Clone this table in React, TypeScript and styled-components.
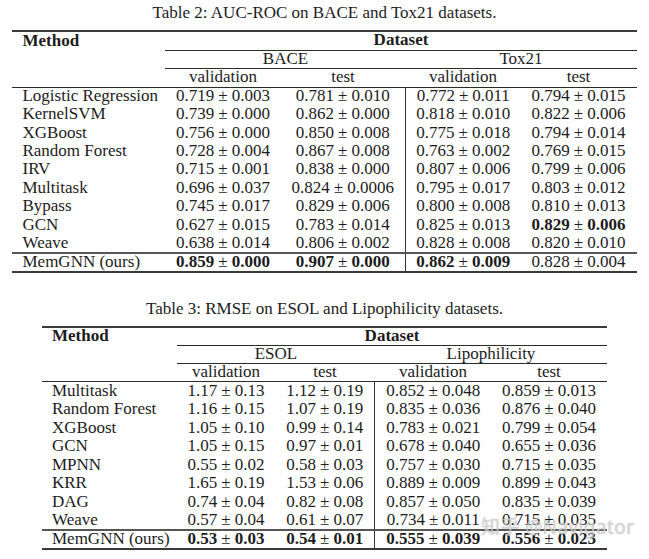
import React from 'react';
import styled, { createGlobalStyle } from 'styled-components';

const GlobalStyle = createGlobalStyle`
  html, body {
    margin: 0;
    padding: 0;
    background: #ffffff;
  }
  body {
    font-family: "Liberation Serif", "Times New Roman", serif;
    color: #1c1c1c;
  }
`;

const Page = styled.div`
  position: relative;
  width: 649px;
  height: 559px;
  overflow: hidden;
  display: flex;
  flex-direction: column;
  align-items: center;
  padding-top: 4px;
  box-sizing: border-box;
`;

const Figure = styled.div<{ $gap?: number }>`
  display: flex;
  flex-direction: column;
  align-items: center;
  margin-top: ${p => p.$gap ?? 0}px;
`;

const Caption = styled.div`
  font-size: 17px;
  line-height: 18px;
  height: 18px;
  margin-bottom: 8px;
  white-space: nowrap;
`;

const Table = styled.table<{ $width: number }>`
  width: ${p => p.$width}px;
  border-collapse: collapse;
  table-layout: fixed;
  font-size: 17px;
  border-top: 2px solid #3a3a3a;
  border-bottom: 2px solid #3a3a3a;
`;

const Row = styled.tr<{ $h: number; $ruleAbove?: boolean }>`
  height: ${p => p.$h}px;
  ${p => (p.$ruleAbove ? 'border-top: 2px solid #555;' : '')}
`;

const HeadRow = styled(Row)<{ $rule?: boolean }>`
  ${p => (p.$rule ? 'border-bottom: 1px solid #2a2a2a;' : '')}
`;

const Cell = styled.td<{ $bold?: boolean; $sep?: boolean; $rule?: boolean }>`
  padding: 0 0 2px 0;
  text-align: center;
  vertical-align: middle;
  white-space: nowrap;
  line-height: 15px;
  font-weight: ${p => (p.$bold ? 700 : 400)};
  ${p => (p.$sep ? 'border-left: 1px solid #333;' : '')}
  ${p => (p.$rule ? 'border-bottom: 1px solid #2a2a2a;' : '')}
`;

const NameCell = styled(Cell)`
  text-align: left;
  padding-left: 10px;
`;

const Num = styled.span<{ $bold?: boolean }>`
  font-weight: ${p => (p.$bold ? 700 : 400)};
`;

const Pm = styled.span`
  font-weight: 400;
  margin: 0 4px;
`;

const Watermark = styled.div`
  position: absolute;
  left: 481px;
  top: 515px;
  font-family: "Noto Sans", "Noto Sans CJK SC", sans-serif;
  font-size: 19px;
  line-height: 24px;
  letter-spacing: 0.4px;
  color: rgba(255, 255, 255, 0.45);
  text-shadow:
    0 0 1px rgba(150, 150, 150, 0.55),
    0 0 1px rgba(150, 150, 150, 0.45);
  white-space: nowrap;
  pointer-events: none;
`;

type Entry = { v: string; b?: boolean };
type DataRow = { name: string; cells: Entry[] };

const Val: React.FC<{ e: Entry }> = ({ e }) => {
  const [a, c] = e.v.split('±').map(s => s.trim());
  return (
    <>
      <Num $bold={e.b}>{a}</Num>
      <Pm>±</Pm>
      <Num $bold={e.b}>{c}</Num>
    </>
  );
};

const auc: DataRow[] = [
  { name: 'Logistic Regression', cells: [{ v: '0.719 ± 0.003' }, { v: '0.781 ± 0.010' }, { v: '0.772 ± 0.011' }, { v: '0.794 ± 0.015' }] },
  { name: 'KernelSVM', cells: [{ v: '0.739 ± 0.000' }, { v: '0.862 ± 0.000' }, { v: '0.818 ± 0.010' }, { v: '0.822 ± 0.006' }] },
  { name: 'XGBoost', cells: [{ v: '0.756 ± 0.000' }, { v: '0.850 ± 0.008' }, { v: '0.775 ± 0.018' }, { v: '0.794 ± 0.014' }] },
  { name: 'Random Forest', cells: [{ v: '0.728 ± 0.004' }, { v: '0.867 ± 0.008' }, { v: '0.763 ± 0.002' }, { v: '0.769 ± 0.015' }] },
  { name: 'IRV', cells: [{ v: '0.715 ± 0.001' }, { v: '0.838 ± 0.000' }, { v: '0.807 ± 0.006' }, { v: '0.799 ± 0.006' }] },
  { name: 'Multitask', cells: [{ v: '0.696 ± 0.037' }, { v: '0.824 ± 0.0006' }, { v: '0.795 ± 0.017' }, { v: '0.803 ± 0.012' }] },
  { name: 'Bypass', cells: [{ v: '0.745 ± 0.017' }, { v: '0.829 ± 0.006' }, { v: '0.800 ± 0.008' }, { v: '0.810 ± 0.013' }] },
  { name: 'GCN', cells: [{ v: '0.627 ± 0.015' }, { v: '0.783 ± 0.014' }, { v: '0.825 ± 0.013' }, { v: '0.829 ± 0.006', b: true }] },
  { name: 'Weave', cells: [{ v: '0.638 ± 0.014' }, { v: '0.806 ± 0.002' }, { v: '0.828 ± 0.008' }, { v: '0.820 ± 0.010' }] },
];
const aucOurs: DataRow = {
  name: 'MemGNN (ours)',
  cells: [{ v: '0.859 ± 0.000', b: true }, { v: '0.907 ± 0.000', b: true }, { v: '0.862 ± 0.009', b: true }, { v: '0.828 ± 0.004' }],
};

const rmse: DataRow[] = [
  { name: 'Multitask', cells: [{ v: '1.17 ± 0.13' }, { v: '1.12 ± 0.19' }, { v: '0.852 ± 0.048' }, { v: '0.859 ± 0.013' }] },
  { name: 'Random Forest', cells: [{ v: '1.16 ± 0.15' }, { v: '1.07 ± 0.19' }, { v: '0.835 ± 0.036' }, { v: '0.876 ± 0.040' }] },
  { name: 'XGBoost', cells: [{ v: '1.05 ± 0.10' }, { v: '0.99 ± 0.14' }, { v: '0.783 ± 0.021' }, { v: '0.799 ± 0.054' }] },
  { name: 'GCN', cells: [{ v: '1.05 ± 0.15' }, { v: '0.97 ± 0.01' }, { v: '0.678 ± 0.040' }, { v: '0.655 ± 0.036' }] },
  { name: 'MPNN', cells: [{ v: '0.55 ± 0.02' }, { v: '0.58 ± 0.03' }, { v: '0.757 ± 0.030' }, { v: '0.715 ± 0.035' }] },
  { name: 'KRR', cells: [{ v: '1.65 ± 0.19' }, { v: '1.53 ± 0.06' }, { v: '0.889 ± 0.009' }, { v: '0.899 ± 0.043' }] },
  { name: 'DAG', cells: [{ v: '0.74 ± 0.04' }, { v: '0.82 ± 0.08' }, { v: '0.857 ± 0.050' }, { v: '0.835 ± 0.039' }] },
  { name: 'Weave', cells: [{ v: '0.57 ± 0.04' }, { v: '0.61 ± 0.07' }, { v: '0.734 ± 0.011' }, { v: '0.715 ± 0.035' }] },
];
const rmseOurs: DataRow = {
  name: 'MemGNN (ours)',
  cells: [{ v: '0.53 ± 0.03', b: true }, { v: '0.54 ± 0.01', b: true }, { v: '0.555 ± 0.039', b: true }, { v: '0.556 ± 0.023', b: true }],
};

interface ResultTableProps {
  caption: string;
  sets: [string, string];
  cols: number[];
  head: [number, number, number];
  rowH: number;
  lastH: number;
  rows: DataRow[];
  ours: DataRow;
  gap?: number;
}

const ResultTable: React.FC<ResultTableProps> = ({ caption, sets, cols, head, rowH, lastH, rows, ours, gap }) => {
  const width = cols.reduce((a, b) => a + b, 0);
  const renderRow = (r: DataRow, h: number, last?: boolean) => (
    <Row key={r.name} $h={h} $ruleAbove={last}>
      <NameCell>{r.name}</NameCell>
      {r.cells.map((c, i) => (
        <Cell key={i} $sep={i === 2}>
          <Val e={c} />
        </Cell>
      ))}
    </Row>
  );

  return (
    <Figure $gap={gap}>
      <Caption>{caption}</Caption>
      <Table $width={width}>
        <colgroup>
          {cols.map((w, i) => (
            <col key={i} style={{ width: w }} />
          ))}
        </colgroup>
        <thead>
          <Row $h={head[0]}>
            <NameCell $bold>Method</NameCell>
            <Cell colSpan={4} $bold $rule>Dataset</Cell>
          </Row>
          <Row $h={head[1]}>
            <Cell />
            <Cell colSpan={2} $rule>{sets[0]}</Cell>
            <Cell colSpan={2} $rule>{sets[1]}</Cell>
          </Row>
          <HeadRow $h={head[2]} $rule>
            <Cell />
            <Cell>validation</Cell>
            <Cell>test</Cell>
            <Cell>validation</Cell>
            <Cell>test</Cell>
          </HeadRow>
        </thead>
        <tbody>
          {rows.map(r => renderRow(r, rowH))}
          {renderRow(ours, lastH, true)}
        </tbody>
      </Table>
    </Figure>
  );
};

export default function App() {
  return (
    <Page>
      <GlobalStyle />
      <ResultTable
        caption="Table 2: AUC-ROC on BACE and Tox21 datasets."
        sets={['BACE', 'Tox21']}
        cols={[153, 115, 125, 115, 116]}
        head={[19, 18, 19]}
        rowH={18.44}
        lastH={19}
        rows={auc}
        ours={aucOurs}
      />
      <ResultTable
        caption="Table 3: RMSE on ESOL and Lipophilicity datasets."
        sets={['ESOL', 'Lipophilicity']}
        cols={[135, 98, 100, 116, 116]}
        head={[19, 18, 18]}
        rowH={18.5}
        lastH={19}
        rows={rmse}
        ours={rmseOurs}
        gap={27}
      />
      <Watermark>知乎 @Navigator</Watermark>
    </Page>
  );
}
